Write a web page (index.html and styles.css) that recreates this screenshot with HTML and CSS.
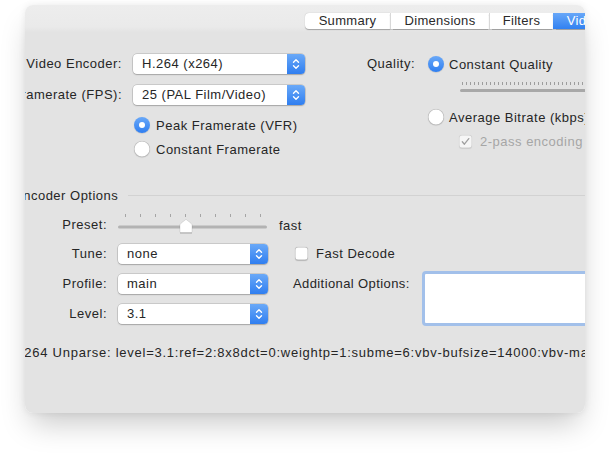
FILE: index.html
```html
<!DOCTYPE html>
<html>
<head>
<meta charset="utf-8">
<link rel="stylesheet" href="styles.css">
</head>
<body>
<div class="stage">
  <div class="card">
    <div class="tabband">
      <div class="tabs">
        <div class="tab first w-summary">Summary</div>
        <div class="tab w-dim">Dimensions</div>
        <div class="tab w-filters">Filters</div>
        <div class="tab active w-video">Video</div>
      </div>
    </div>

    <div class="top">
      <div class="left-grid">
        <div class="label">Video Encoder:</div>
        <div class="popup w172">
          <span class="popup-text">H.264 (x264)</span>
          <span class="popup-arrows"><svg width="18" height="20" viewBox="0 0 18 20"><path d="M6.5 8.2 L9 5.7 L11.5 8.2 M6.5 11.8 L9 14.3 L11.5 11.8" fill="none" stroke="#fff" stroke-width="1.4" stroke-linecap="round" stroke-linejoin="round"/></svg></span>
        </div>
        <div class="label">Framerate (FPS):</div>
        <div class="popup w172">
          <span class="popup-text">25 (PAL Film/Video)</span>
          <span class="popup-arrows"><svg width="18" height="20" viewBox="0 0 18 20"><path d="M6.5 8.2 L9 5.7 L11.5 8.2 M6.5 11.8 L9 14.3 L11.5 11.8" fill="none" stroke="#fff" stroke-width="1.4" stroke-linecap="round" stroke-linejoin="round"/></svg></span>
        </div>
        <div class="radio-group">
          <div class="option"><span class="radio on"></span><span>Peak Framerate (VFR)</span></div>
          <div class="option"><span class="radio"></span><span>Constant Framerate</span></div>
        </div>
      </div>

      <div class="right-grid">
        <div class="label qlabel">Quality:</div>
        <div class="quality-col">
          <div class="option row20"><span class="radio on"></span><span>Constant Quality</span></div>
          <svg class="qslider" width="170" height="16" viewBox="0 0 170 16">
            <g stroke="#9d9d9d" stroke-width="1">
              <path d="M2.5 4v3M6.5 4v3M10.5 4v3M14.5 4v3M18.5 4v3M22.5 4v3M26.5 4v3M30.5 4v3M34.5 4v3M38.5 4v3M42.5 4v3M46.5 4v3M50.5 4v3M54.5 4v3M58.5 4v3M62.5 4v3M66.5 4v3M70.5 4v3M74.5 4v3M78.5 4v3M82.5 4v3M86.5 4v3M90.5 4v3M94.5 4v3M98.5 4v3M102.5 4v3M106.5 4v3M110.5 4v3M114.5 4v3M118.5 4v3M122.5 4v3M126.5 4v3M130.5 4v3M134.5 4v3M138.5 4v3M142.5 4v3M146.5 4v3M150.5 4v3M154.5 4v3M158.5 4v3M162.5 4v3M166.5 4v3"/>
            </g>
            <rect x="0" y="11" width="170" height="3" rx="1.5" fill="#a8a8a8"/>
          </svg>
          <div class="option row20 mt13"><span class="radio"></span><span>Average Bitrate (kbps)</span></div>
          <div class="option row20 disabled twopass"><span class="check"><svg width="13" height="13" viewBox="0 0 13 13"><path d="M3.3 6.8 L5.4 9.2 L9.8 3.6" fill="none" stroke="#a0a0a0" stroke-width="1.3" stroke-linecap="round" stroke-linejoin="round"/></svg></span><span>2-pass encoding</span></div>
        </div>
      </div>
    </div>

    <div class="section-head">
      <span>Encoder Options</span>
      <span class="rule"></span>
    </div>

    <div class="enc-grid">
      <div class="label r1">Preset:</div>
      <div class="preset r1">
        <svg width="149" height="28" viewBox="0 0 149 28">
          <g stroke="#a5a5a5" stroke-width="1">
            <path d="M7.5 3v3M22.5 3v3M37.5 3v3M52.5 3v3M67.5 3v3M82.5 3v3M97.5 3v3M112.5 3v3M127.5 3v3M142.5 3v3"/>
          </g>
          <rect x="0" y="14.5" width="149" height="3" rx="1.5" fill="#b3b3b3"/>
          <path d="M62 21.5 L62 14 Q62 13 63 12.3 L67.5 8.8 Q68 8.4 68.5 8.8 L73 12.3 Q74 13 74 14 L74 21.5 Q74 22 73.5 22 L62.5 22 Q62 22 62 21.5 Z" fill="rgba(0,0,0,0.18)" transform="translate(0,0.8)"/>
          <path d="M62 21 L62 14 Q62 13 63 12.3 L67.5 8.8 Q68 8.4 68.5 8.8 L73 12.3 Q74 13 74 14 L74 21 Q74 21.5 73.5 21.5 L62.5 21.5 Q62 21.5 62 21 Z" fill="#ffffff" stroke="rgba(0,0,0,0.2)" stroke-width="0.5"/>
        </svg>
        <span class="fast">fast</span>
      </div>

      <div class="label r2">Tune:</div>
      <div class="popup w150 r2">
        <span class="popup-text">none</span>
        <span class="popup-arrows"><svg width="18" height="20" viewBox="0 0 18 20"><path d="M6.5 8.2 L9 5.7 L11.5 8.2 M6.5 11.8 L9 14.3 L11.5 11.8" fill="none" stroke="#fff" stroke-width="1.4" stroke-linecap="round" stroke-linejoin="round"/></svg></span>
      </div>
      <div class="option fastdecode r2"><span class="check"></span><span>Fast Decode</span></div>

      <div class="label r3">Profile:</div>
      <div class="popup w150 r3">
        <span class="popup-text">main</span>
        <span class="popup-arrows"><svg width="18" height="20" viewBox="0 0 18 20"><path d="M6.5 8.2 L9 5.7 L11.5 8.2 M6.5 11.8 L9 14.3 L11.5 11.8" fill="none" stroke="#fff" stroke-width="1.4" stroke-linecap="round" stroke-linejoin="round"/></svg></span>
      </div>
      <div class="addl r3">Additional Options:</div>
      <div class="textbox"></div>

      <div class="label r4">Level:</div>
      <div class="popup w150 r4">
        <span class="popup-text">3.1</span>
        <span class="popup-arrows"><svg width="18" height="20" viewBox="0 0 18 20"><path d="M6.5 8.2 L9 5.7 L11.5 8.2 M6.5 11.8 L9 14.3 L11.5 11.8" fill="none" stroke="#fff" stroke-width="1.4" stroke-linecap="round" stroke-linejoin="round"/></svg></span>
      </div>
    </div>

    <div class="unparse">x264 Unparse: level=3.1:ref=2:8x8dct=0:weightp=1:subme=6:vbv-bufsize=14000:vbv-maxrate=17500</div>
  </div>
</div>
</body>
</html>
```

FILE: styles.css
```css
html, body {
  margin: 0;
  padding: 0;
  background: #ffffff;
}

body {
  font-family: "Liberation Sans", Arial, sans-serif;
  font-size: 13px;
  letter-spacing: 0.5px;
  color: #262626;
  width: 610px;
  height: 458px;
  overflow: hidden;
}

.stage {
  padding: 5px 0 0 25px;
}

.card {
  width: 560px;
  height: 408px;
  border-radius: 8px;
  overflow: hidden;
  background: linear-gradient(#ededed 0px, #eaeaea 22px, #e3e3e3 27px, #e3e3e3 100%);
  box-shadow: 0 16px 30px -6px rgba(0, 0, 0, 0.22), 0 0 7px rgba(0, 0, 0, 0.07);
}

/* tabs */
.tabband {
  height: 24px;
}

.tabs {
  display: flex;
  margin-left: 280px;
  padding-top: 8px;
  white-space: nowrap;
}

.tab {
  flex: none;
  height: 16px;
  line-height: 16px;
  text-align: center;
  background: #ffffff;
  border-left: 1px solid #d8d8d8;
  box-shadow: 0 0.5px 1px rgba(0, 0, 0, 0.3);
  color: #2a2a2a;
  letter-spacing: 0.3px;
}

.tab.first {
  border-left: none;
  border-radius: 4px 0 0 4px;
}

.tab.active {
  background: linear-gradient(#68a7f8, #3181f1);
  color: #ffffff;
  border-left: none;
}

.w-summary { width: 85px; }
.w-dim { width: 98px; }
.w-filters { width: 63px; }
.w-video { width: 62px; }

/* top section */
.top {
  display: flex;
  align-items: flex-start;
  margin-top: 25px;
}

.left-grid {
  display: grid;
  grid-template-columns: 117px 172px;
  column-gap: 11px;
  row-gap: 11px;
  margin-left: -20px;
  flex: none;
}

.label {
  text-align: right;
  white-space: nowrap;
  height: 20px;
  line-height: 20px;
  align-self: center;
}

.qlabel {
  align-self: start;
}

.popup {
  display: flex;
  align-items: center;
  height: 20px;
  background: #ffffff;
  border-radius: 4px;
  overflow: hidden;
  box-shadow: 0 0 0 0.5px rgba(0, 0, 0, 0.22), 0 1px 1.5px rgba(0, 0, 0, 0.18);
  white-space: nowrap;
}

.w172 { width: 172px; }
.w150 { width: 150px; }

.popup-text {
  flex: 1;
  padding-left: 9px;
  line-height: 20px;
}

.popup-arrows {
  flex: none;
  width: 18px;
  height: 20px;
  display: flex;
  background: linear-gradient(#6aa9f8, #2f7ef0);
}

.radio-group {
  grid-column: 2;
  display: flex;
  flex-direction: column;
  gap: 6px;
  padding-left: 1px;
}

.option {
  display: flex;
  align-items: center;
  gap: 6px;
  height: 18px;
  white-space: nowrap;
}

.row20 {
  height: 20px;
  gap: 5px;
}

.radio {
  flex: none;
  width: 16px;
  height: 16px;
  border-radius: 50%;
  background: #ffffff;
  box-shadow: inset 0 0 0 0.5px rgba(0, 0, 0, 0.28), 0 0.5px 1px rgba(0, 0, 0, 0.2);
  display: flex;
  align-items: center;
  justify-content: center;
}

.radio.on {
  background: linear-gradient(#69a8f8, #2f7ef0);
  box-shadow: 0 0.5px 1px rgba(0, 0, 0, 0.2);
}

.radio.on::after {
  content: "";
  width: 6px;
  height: 6px;
  border-radius: 50%;
  background: #ffffff;
}

.check {
  flex: none;
  width: 13px;
  height: 13px;
  border-radius: 3px;
  background: #ffffff;
  box-shadow: inset 0 0 0 0.5px rgba(0, 0, 0, 0.28), 0 0.5px 1px rgba(0, 0, 0, 0.2);
  display: flex;
}

.right-grid {
  display: grid;
  grid-template-columns: 80px auto;
  column-gap: 13px;
  margin-left: 30px;
  align-items: start;
  flex: none;
}

.quality-col {
  display: flex;
  flex-direction: column;
}

.qslider {
  display: block;
  margin-top: 4px;
  margin-left: 32px;
}

.mt13 {
  margin-top: 13px;
}

.twopass {
  margin-top: 4px;
  margin-left: 31px;
  gap: 8px;
}

.disabled {
  color: #a6a6a6;
}

.disabled .check {
  background: #f6f6f6;
  box-shadow: inset 0 0 0 0.5px rgba(0, 0, 0, 0.16), 0 0.5px 1px rgba(0, 0, 0, 0.1);
}

/* encoder options */
.section-head {
  display: flex;
  align-items: center;
  height: 16px;
  margin-top: 29px;
  margin-left: -11px;
  white-space: nowrap;
}

.rule {
  flex: 1;
  height: 1px;
  background: #d2d2d2;
  margin-left: 10px;
}

.enc-grid {
  display: grid;
  grid-template-columns: 113px 175px 129px 1fr;
  grid-template-rows: 28px 30px 30px 30px;
  margin-left: -20px;
  margin-top: 8px;
}

.enc-grid .label {
  grid-column: 1;
  padding-right: 11px;
}

.r1 { grid-row: 1; }
.r2 { grid-row: 2; }
.r3 { grid-row: 3; }
.r4 { grid-row: 4; }

.enc-grid .popup {
  grid-column: 2;
  align-self: center;
}

.preset {
  grid-column: 2 / span 3;
  display: flex;
  align-items: center;
  gap: 12px;
  align-self: center;
}

.preset svg {
  display: block;
}

.fast {
  margin-top: 1px;
}

.fastdecode {
  grid-column: 3 / span 2;
  align-self: start;
  margin-top: 5px;
  margin-left: 2px;
  gap: 8px;
}

.addl {
  grid-column: 3;
  align-self: center;
  white-space: nowrap;
  line-height: 20px;
  letter-spacing: 0.4px;
}

.textbox {
  grid-column: 4;
  grid-row: 3 / span 2;
  align-self: start;
  margin-top: 2px;
  width: 200px;
  height: 49px;
  background: #ffffff;
  border: 3.5px solid #a2c0ea;
  border-radius: 4px;
}

.unparse {
  margin-top: 16px;
  margin-left: -8px;
  line-height: 16px;
  white-space: nowrap;
  letter-spacing: 0.75px;
}
```
